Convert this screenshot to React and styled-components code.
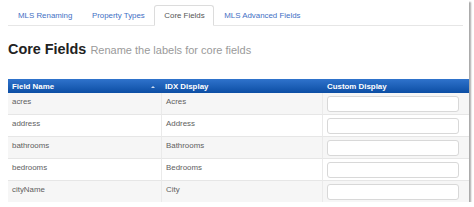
import React from "react";
import styled, { createGlobalStyle } from "styled-components";

const Global = createGlobalStyle`
  html, body { margin: 0; padding: 0; background: #fff; }
  body { font-family: "Liberation Sans", Arial, sans-serif; }
`;

const Frame = styled.div`
  width: 469px;
  height: 202px;
  background: #fff;
  box-shadow: 2px 2px 1.5px 0 #ababab;
  box-sizing: border-box;
  padding: 5px 0 0 8px;
  overflow: hidden;
`;

const Tabs = styled.ul`
  display: flex;
  list-style: none;
  margin: 0;
  padding: 0;
  height: 20px;
  border-bottom: 1px solid #e6e6e6;
  margin-right: 6px;
`;

const Tab = styled.li`
  display: flex;
  align-items: center;
  padding: 0 8.5px 0 9px;
  margin-bottom: -1px;
  font-size: 7.9px;
  color: ${(p) => (p.$active ? "#555" : "#3f6fc4")};
  background: ${(p) => (p.$active ? "#fff" : "transparent")};
  border: 1px solid ${(p) => (p.$active ? "#dcdcdc" : "transparent")};
  border-bottom-color: ${(p) => (p.$active ? "#fff" : "transparent")};
  border-radius: 3px 3px 0 0;
  box-sizing: border-box;
  height: 21px;
`;

const Heading = styled.div`
  display: flex;
  align-items: baseline;
  gap: 4px;
  margin-top: 15px;
  height: 17px;
`;

const Title = styled.h1`
  margin: 0;
  font-size: 14.4px;
  font-weight: bold;
  color: #222;
`;

const Subtitle = styled.span`
  font-size: 11px;
  color: #9a9a9a;
`;

const Table = styled.div`
  margin-top: 21px;
  display: grid;
  grid-template-columns: 153px 161px 147px;
`;

const HeadCell = styled.div`
  position: relative;
  height: 14px;
  background: linear-gradient(#2f73cc, #0c4ea4);
  color: #fff;
  font-size: 7.9px;
  font-weight: bold;
  display: flex;
  align-items: center;
  padding-left: ${(p) => p.$pad || 4}px;
  box-sizing: border-box;
`;

const SortMark = styled.span`
  position: absolute;
  right: 6px;
  top: 7px;
  width: 0;
  height: 0;
  border-left: 2px solid transparent;
  border-right: 2px solid transparent;
  border-bottom: 2px solid #fff;
  opacity: 0.8;
`;

const Cell = styled.div`
  height: 22px;
  box-sizing: border-box;
  background: ${(p) => (p.$odd ? "#f6f6f6" : "#fff")};
  border-bottom: 1px solid #e6e6e6;
  border-left: ${(p) => (p.$first ? "none" : "1px solid #eaeaea")};
  padding: 4px 0 0 ${(p) => p.$pad || 4}px;
  font-size: 7.9px;
  color: #5e5e5e;
  line-height: 10px;
`;

const InputCell = styled(Cell)`
  padding: 3px 0 0 4px;
`;

const Field = styled.input`
  display: block;
  width: 132px;
  height: 16px;
  box-sizing: border-box;
  border: 1px solid #d8d8d8;
  border-radius: 3px;
  background: #fff;
  padding: 0;
  margin: 0;
  outline: none;
`;

const rows = [
  ["acres", "Acres"],
  ["address", "Address"],
  ["bathrooms", "Bathrooms"],
  ["bedrooms", "Bedrooms"],
  ["cityName", "City"],
];

export default function App() {
  return (
    <>
      <Global />
      <Frame>
        <Tabs>
          <Tab>MLS Renaming</Tab>
          <Tab>Property Types</Tab>
          <Tab $active>Core Fields</Tab>
          <Tab>MLS Advanced Fields</Tab>
        </Tabs>
        <Heading>
          <Title>Core Fields</Title>
          <Subtitle>Rename the labels for core fields</Subtitle>
        </Heading>
        <Table>
          <HeadCell>
            Field Name
            <SortMark />
          </HeadCell>
          <HeadCell>IDX Display</HeadCell>
          <HeadCell $pad={5}>Custom Display</HeadCell>
          {rows.map(([name, display], i) => (
            <React.Fragment key={name}>
              <Cell $first $odd={i % 2 === 0}>{name}</Cell>
              <Cell $odd={i % 2 === 0}>{display}</Cell>
              <InputCell $odd={i % 2 === 0}>
                <Field type="text" />
              </InputCell>
            </React.Fragment>
          ))}
        </Table>
      </Frame>
    </>
  );
}
